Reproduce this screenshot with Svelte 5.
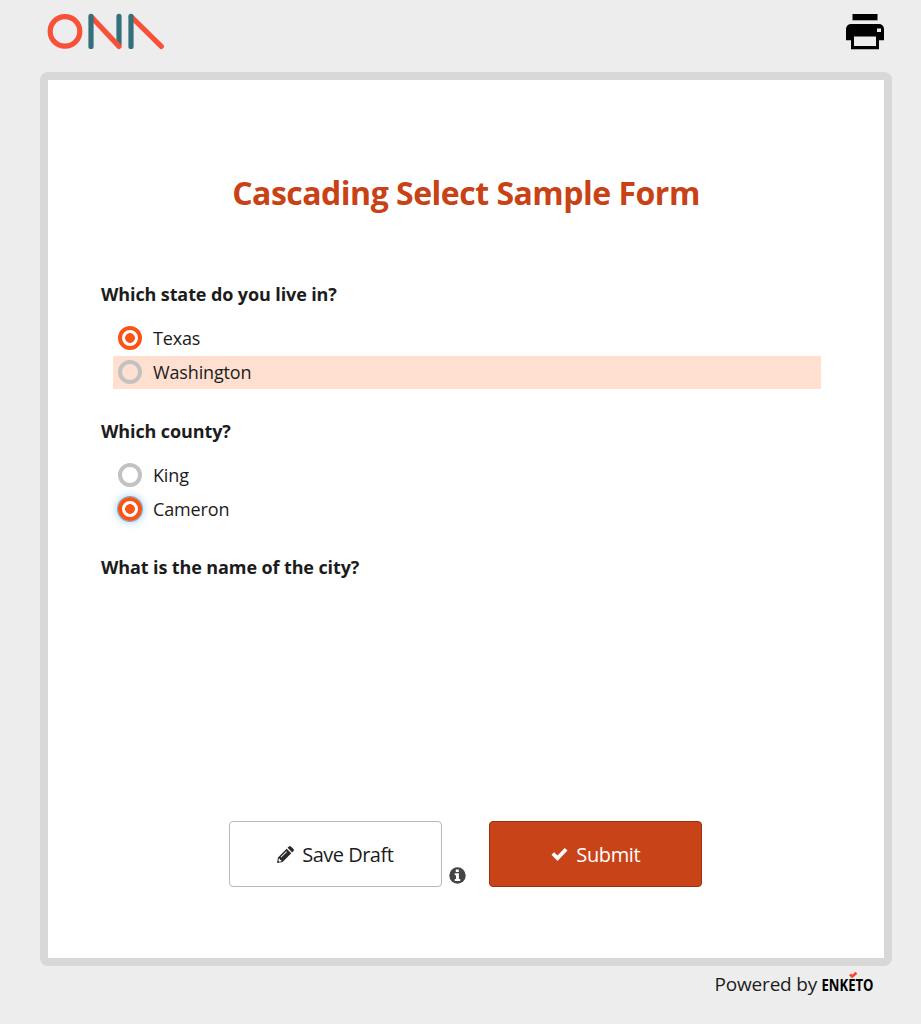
<script lang="ts">
  type Question = {
    name: string;
    label: string;
    options: string[];
  };

  const questions: Question[] = [
    { name: "state", label: "Which state do you live in?", options: ["Texas", "Washington"] },
    { name: "county", label: "Which county?", options: ["King", "Cameron"] },
    { name: "city", label: "What is the name of the city?", options: [] },
  ];

  let answers: Record<string, string> = $state({ state: "Texas", county: "Cameron" });
  let active = $state("Washington");
  let focused = $state("Cameron");

  const pick = (name: string, option: string) => {
    answers[name] = option;
    focused = option;
  };
</script>

<div class="page">
  <header>
    <svg class="logo" width="118" height="38" viewBox="47 12 118 38" role="img" aria-label="Ona">
      <g fill="none" stroke-width="5.2" stroke-linecap="round">
        <circle cx="65" cy="31.4" r="14.8" stroke="#f9503a" />
        <path d="M119 16.4V44" stroke="#34707c" />
        <path d="M91.5 17L119 46.4M131.5 17L161.3 46.4" stroke="#f9503a" />
        <path d="M91 16.4V46.4M131 16.4V46.4" stroke="#34707c" />
      </g>
    </svg>
    <button class="print" aria-label="Print">
      <svg width="38" height="36" viewBox="0 0 38 36">
        <path d="M6.5 0h25v6.3h-25z" />
        <path
          fill-rule="evenodd"
          d="M5 10h28a5 5 0 0 1 5 5v11.3h-5V35.3H5V26.3H0V15a5 5 0 0 1 5-5zM8 22.5V32h22V22.5zM31 14.5v3.5h4v-3.5z"
        />
      </svg>
    </button>
  </header>

  <main>
    <h1>Cascading Select Sample Form</h1>

    {#each questions as q (q.name)}
      <fieldset>
        <legend>{q.label}</legend>
        {#each q.options as option (option)}
          <label class:active={active === option} onmouseenter={() => (active = option)}>
            <input
              type="radio"
              name={q.name}
              value={option}
              class:focused={focused === option}
              checked={answers[q.name] === option}
              onchange={() => pick(q.name, option)}
            />
            <span>{option}</span>
          </label>
        {/each}
      </fieldset>
    {/each}

    <div class="controls">
      <button class="btn">
        <svg width="17" height="17" viewBox="0 0 17 17">
          <path
            fill-rule="evenodd"
            d="M0 17l1-5.6L9.7 2.7l4.6 4.6L5.6 16zM1.8 12.7l-.4 2.1.9.9 2.1-.4v-1.2H3v-1.4zM3.6 11l.6.6 5.7-5.7-.6-.6zM10.6 1.8l1.3-1.3q1-.9 2 0l2.6 2.6q.9 1 0 2l-1.3 1.3z"
          />
        </svg>
        Save Draft
      </button>
      <span class="info" title="Info">
        <svg width="17" height="17" viewBox="0 0 17 17">
          <circle cx="8.5" cy="8.5" r="8.2" fill="#444" />
          <path d="M6.8 2.4h3v2.5h-3zM5.7 6.3h4.2v5.6h1.3v2H5.7v-2H7V8.3H5.7z" fill="#fff" />
        </svg>
      </span>
      <button class="btn primary">
        <svg width="17" height="14" viewBox="0 0 17 14">
          <path d="M1.8 6.5l4.7 4.7 8.6-8.9" fill="none" stroke="#fff" stroke-width="3.8" />
        </svg>
        Submit
      </button>
    </div>
  </main>

  <footer>
    <span>Powered by</span>
    <svg class="enketo" width="54" height="27" viewBox="0 0 54 27" role="img" aria-label="Enketo">
      <text x="0.5" y="20" textLength="52" lengthAdjust="spacingAndGlyphs">ENKETO</text>
      <path d="M29 3.3l2.2 2.2L35.5 1.8" fill="none" stroke="#fa4327" stroke-width="2.5" />
    </svg>
  </footer>
</div>

<style>
  :global(body) {
    background: #ededed;
  }
  .page {
    box-sizing: border-box;
    height: 1024px;
    padding: 0 29px 0 40px;
    overflow: hidden;
    background: #ededed;
    color: #1c1c1c;
    font-family: "Open Sans", sans-serif;
    font-size: 18px;
  }
  header {
    display: flex;
    align-items: flex-start;
    justify-content: space-between;
    box-sizing: border-box;
    height: 72px;
    padding: 12px 8px 0 7px;
  }
  button {
    font: inherit;
    cursor: pointer;
  }
  .print {
    padding: 1.5px 0 0;
    background: none;
    border: none;
    line-height: 0;
  }
  main {
    display: flex;
    flex-direction: column;
    box-sizing: border-box;
    height: 894px;
    padding: 0 53px;
    border: 8px solid #d8d8d8;
    border-radius: 8px;
    background: #fff;
  }
  h1 {
    margin: 91px 0 69px;
    color: #c84216;
    font-size: 32px;
    line-height: 44px;
    letter-spacing: -0.5px;
    text-align: center;
  }
  fieldset {
    min-width: 0;
    margin: 0 0 30px;
    padding: 0;
    border: none;
  }
  legend {
    padding: 0;
    margin-bottom: 17px;
    font-weight: 700;
    line-height: 21px;
    letter-spacing: -0.11px;
  }
  label {
    display: flex;
    align-items: center;
    box-sizing: border-box;
    height: 33px;
    margin: 0 10px 1.3px 12px;
    padding-left: 4.5px;
    letter-spacing: -0.15px;
    cursor: pointer;
  }
  label span {
    margin-top: -1px;
  }
  label.active {
    background: #ffe0d0;
  }
  input {
    appearance: none;
    box-sizing: border-box;
    width: 24px;
    height: 24px;
    margin: -1px 11.5px 0 0;
    border: 4px solid #c2c2c2;
    border-radius: 50%;
  }
  input:checked {
    border-color: #fa5314;
    background: radial-gradient(circle, #fa5314 4.5px, #fff 5.2px);
  }
  input.focused {
    box-shadow: 0 0 0 1px #66afe9, 0 0 8px 1px rgba(102, 175, 233, 0.6);
  }
  .controls {
    display: flex;
    justify-content: center;
    margin: auto 0 71px -1px;
  }
  .btn {
    display: flex;
    align-items: center;
    justify-content: center;
    gap: 8px;
    box-sizing: border-box;
    width: 213px;
    height: 66px;
    padding: 0;
    border: 1px solid #b8b8b8;
    border-radius: 4px;
    background: #fff;
    color: #1c1c1c;
    font-size: 20px;
    letter-spacing: -0.5px;
  }
  .btn svg {
    fill: #2a2a2a;
  }
  .primary {
    border-color: #9e2f0c;
    background: #c84418;
    color: #fff;
    letter-spacing: -0.4px;
  }
  .info {
    display: flex;
    align-items: flex-end;
    box-sizing: border-box;
    width: 47.5px;
    padding: 0 0 3px 7px;
  }
  footer {
    display: flex;
    align-items: flex-start;
    justify-content: flex-end;
    gap: 4px;
    padding: 5px 17px 0 0;
    font-size: 19px;
    line-height: 27px;
    letter-spacing: -0.2px;
  }
  .enketo {
    overflow: visible;
  }
  .enketo text {
    fill: #000;
    font-size: 16px;
    font-weight: 700;
    letter-spacing: 0;
  }
</style>
